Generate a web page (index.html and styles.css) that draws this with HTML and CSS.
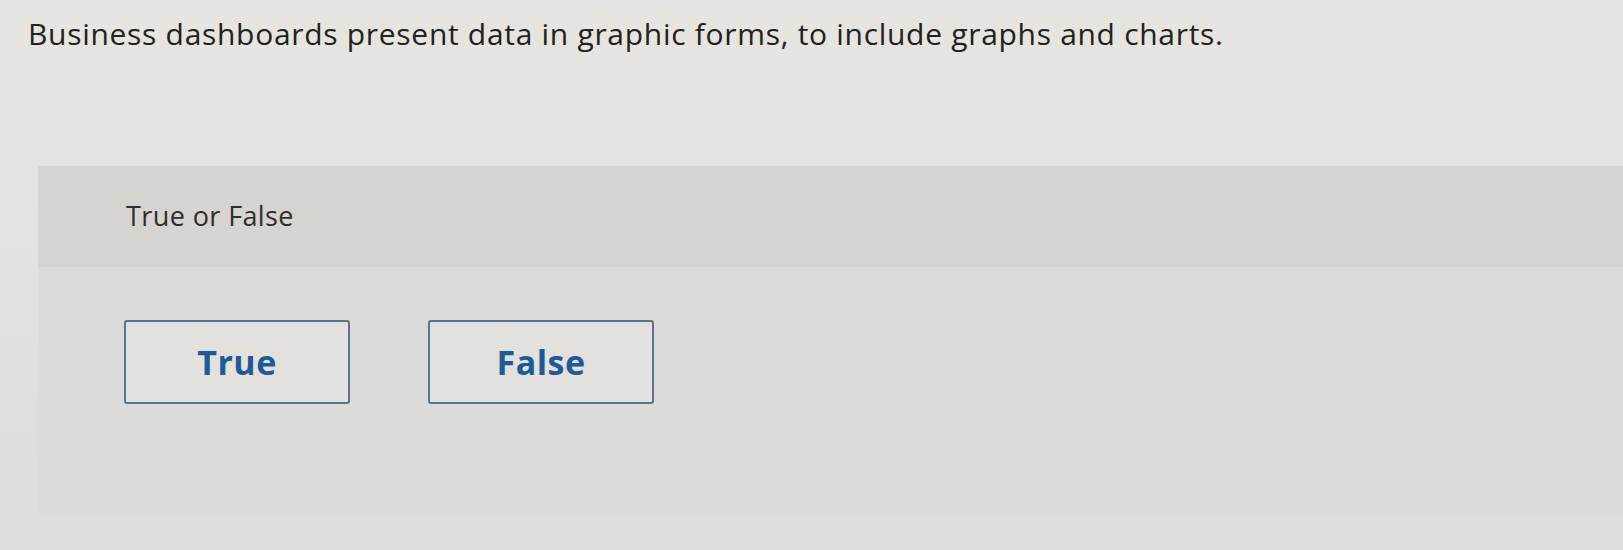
FILE: index.html
```html
<!DOCTYPE html>
<html lang="en">
<head>
<meta charset="utf-8">
<title>True or False</title>
<link rel="stylesheet" href="styles.css">
</head>
<body>
<main class="page">
  <p class="prompt">Business dashboards present data in graphic forms, to include graphs and charts.</p>
  <section class="panel">
    <div class="panel-head">
      <span class="qtype">True or False</span>
    </div>
    <div class="panel-body">
      <div class="choices">
        <button class="choice" type="button">True</button>
        <button class="choice" type="button">False</button>
      </div>
    </div>
  </section>
</main>
</body>
</html>
```

FILE: styles.css
```css
html, body {
  margin: 0;
  padding: 0;
}
body {
  width: 1623px;
  height: 550px;
  overflow: hidden;
  background: linear-gradient(180deg, #e6e5df 0%, #e2e1dc 60%, #dcdcd8 100%);
  font-family: "Open Sans", "Liberation Sans", sans-serif;
  color: #2a2a2a;
}
.page {
  display: flex;
  flex-direction: column;
  padding-top: 14px;
}
.prompt {
  margin: 0 0 0 28px;
  font-size: 30px;
  line-height: 40px;
  font-weight: 400;
  letter-spacing: 0.7px;
  color: #222;
}
.panel {
  margin: 112px 0 0 38px;
  display: flex;
  flex-direction: column;
}
.panel-head {
  height: 101px;
  background: #d6d4cf;
  padding: 33px 0 0 88px;
  box-sizing: border-box;
}
.qtype {
  font-size: 27px;
  line-height: 34px;
  letter-spacing: 0.4px;
  color: #2e2e2e;
}
.panel-body {
  height: 248px;
  background: #dcdbd7;
  padding: 53px 0 0 86px;
  box-sizing: border-box;
}
.choices {
  display: flex;
  gap: 78px;
}
.choice {
  width: 226px;
  height: 84px;
  box-sizing: border-box;
  border: 2px solid #5b7390;
  border-radius: 3px;
  background: #e2e1dd;
  font-family: "Open Sans", "Liberation Sans", sans-serif;
  font-weight: 700;
  font-size: 34px;
  letter-spacing: 0.5px;
  color: #1e5a98;
  padding: 0;
}
```
